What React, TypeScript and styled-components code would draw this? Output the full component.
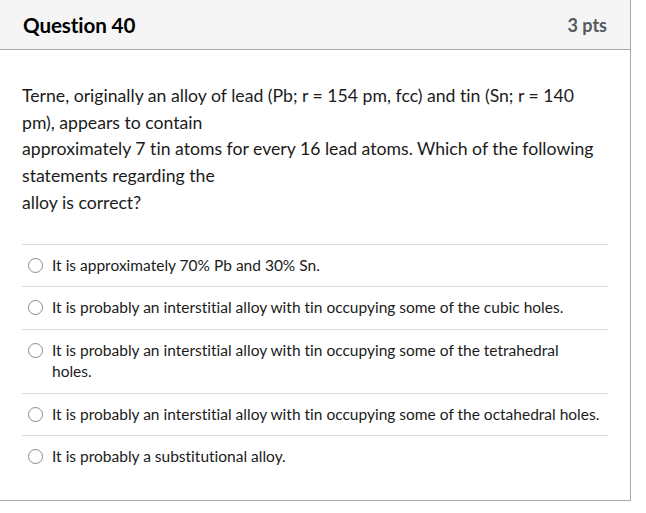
import React from "react";
import styled, { createGlobalStyle } from "styled-components";

const Global = createGlobalStyle`
  html, body { margin: 0; padding: 0; background: #ffffff; }
  body {
    font-family: Lato, "Noto Sans", sans-serif;
    color: #2d3b45;
    font-variant-ligatures: none;
    font-feature-settings: "liga" 0, "dlig" 0;
  }
`;

const Card = styled.div`
  width: 630px;
  background: #ffffff;
  border-right: 1px solid #a9a9a9;
  border-bottom: 1px solid #a9a9a9;
`;

const Header = styled.div`
  height: 49px;
  display: flex;
  align-items: center;
  justify-content: space-between;
  padding: 0 23px 0 23px;
  background: #f5f5f5;
  border-bottom: 1px solid #a9a9a9;
`;

const Title = styled.h2`
  margin: 0;
  font-size: 20.6px;
  font-weight: 700;
  color: #000000;
  letter-spacing: -0.1px;
`;

const Points = styled.div`
  font-size: 18px;
  font-weight: 700;
  color: #555a5e;
`;

const Body = styled.div`
  padding: 33px 22px 22px 22px;
`;

const QuestionText = styled.p`
  margin: 0 0 27px 0;
  font-size: 17.65px;
  line-height: 26.7px;
  color: #1b1b1b;
`;

const Answers = styled.div`
  display: flex;
  flex-direction: column;
`;

const AnswerRow = styled.label`
  display: flex;
  align-items: flex-start;
  gap: 9px;
  padding: 10px 0 10px 6px;
  border-top: 1px solid #dcdcdc;
  font-size: 15.5px;
  line-height: 21.5px;
  color: #1b1b1b;
`;

const Radio = styled.span`
  flex: none;
  box-sizing: border-box;
  width: 15px;
  height: 15px;
  margin-top: 3px;
  border-radius: 50%;
  border: 1.5px solid #8c8c8c;
  background: #ffffff;
`;

const AnswerText = styled.span``;

const answers: React.ReactNode[] = [
  "It is approximately 70% Pb and 30% Sn.",
  "It is probably an interstitial alloy with tin occupying some of the cubic holes.",
  <>
    It is probably an interstitial alloy with tin occupying some of the tetrahedral
    <br />
    holes.
  </>,
  "It is probably an interstitial alloy with tin occupying some of the octahedral holes.",
  "It is probably a substitutional alloy.",
];

export default function App() {
  return (
    <>
      <Global />
      <Card>
        <Header>
          <Title>Question 40</Title>
          <Points>3 pts</Points>
        </Header>
        <Body>
          <QuestionText>
            Terne, originally an alloy of lead (Pb; r = 154 pm, fcc) and tin (Sn; r = 140
            <br />
            pm), appears to contain
            <br />
            approximately 7 tin atoms for every 16 lead atoms. Which of the following
            <br />
            statements regarding the
            <br />
            alloy is correct?
          </QuestionText>
          <Answers>
            {answers.map((a, i) => (
              <AnswerRow key={i}>
                <Radio />
                <AnswerText>{a}</AnswerText>
              </AnswerRow>
            ))}
          </Answers>
        </Body>
      </Card>
    </>
  );
}
